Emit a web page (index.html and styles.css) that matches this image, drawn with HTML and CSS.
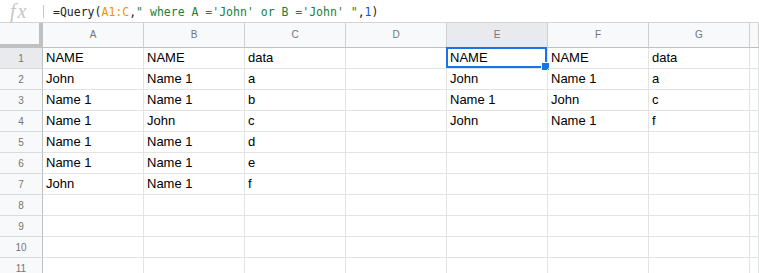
FILE: index.html
```html
<!DOCTYPE html>
<html lang="en">
<head>
    <meta charset="UTF-8">
    <meta name="viewport" content="width=device-width, initial-scale=1.0">
    <title>Query sheet</title>
    <link rel="stylesheet" href="styles.css">
</head>
<body>
    <div class="formula-bar">
        <span class="fx">fx</span>
        <span class="sep"></span>
        <div class="formula">=Query(<span class="ref">A1:C</span>,<span class="str">" where A ='John' or B ='John' "</span>,<span class="num">1</span>)</div>
    </div>

    <div class="grid" id="grid"></div>

    <script>
        const cols = ['A', 'B', 'C', 'D', 'E', 'F', 'G', ''];
        const data = [
            ['NAME', 'NAME', 'data', '', 'NAME', 'NAME', 'data'],
            ['John', 'Name 1', 'a', '', 'John', 'Name 1', 'a'],
            ['Name 1', 'Name 1', 'b', '', 'Name 1', 'John', 'c'],
            ['Name 1', 'John', 'c', '', 'John', 'Name 1', 'f'],
            ['Name 1', 'Name 1', 'd'],
            ['Name 1', 'Name 1', 'e'],
            ['John', 'Name 1', 'f']
        ];
        const grid = document.getElementById('grid');

        function add(cls, text) {
            let el = document.createElement('div');
            el.className = cls;
            el.innerText = text || '';
            grid.appendChild(el);
            return el;
        }

        // header row
        add('corner');
        cols.forEach((c, i) => add(i === 4 ? 'col-head active' : 'col-head', c));

        for (let r = 0; r < 11; r++) {
            add(r === 0 ? 'row-head active' : 'row-head', r + 1);
            for (let c = 0; c < cols.length; c++) {
                let row = data[r] || [];
                let cell = add('cell', row[c]);
                // E1 is the selected cell
                if (r === 0 && c === 4) {
                    let sel = document.createElement('div');
                    sel.className = 'selection';
                    sel.innerHTML = '<span class="handle"></span>';
                    cell.appendChild(sel);
                }
            }
        }
    </script>
</body>
</html>
```

FILE: styles.css
```css
body {
    margin: 0;
    width: 759px;
    height: 273px;
    overflow: hidden;
    background: #fff;
    font-family: "Liberation Sans", Arial, sans-serif;
}

.formula-bar {
    height: 23px;
    box-sizing: border-box;
    border-bottom: 1px solid #d4d4d4;
    display: flex;
    align-items: center;
}

.fx {
    width: 43px;
    padding-left: 10px;
    box-sizing: border-box;
    font-family: "Liberation Serif", serif;
    font-style: italic;
    font-size: 20px;
    letter-spacing: 2px;
    color: #c6c6c6;
    line-height: 22px;
}

.sep {
    width: 1px;
    height: 13px;
    background: #c8c8c8;
    margin-right: 9px;
}

.formula {
    font-family: "DejaVu Sans Mono", "Liberation Mono", monospace;
    font-size: 11.5px;
    color: #222;
    white-space: pre;
    padding-top: 1px;
}

.ref { color: #f09300; }
.str { color: #188038; }
.num { color: #1155cc; }

.grid {
    display: grid;
    grid-template-columns: 43px repeat(7, 101px) 1fr;
    grid-template-rows: 25px repeat(11, 21px);
}

.corner {
    background: #f8f9fa;
    border-right: 4px solid #c0c0c0;
    border-bottom: 4px solid #c0c0c0;
}

.col-head {
    background: #f8f9fa;
    border-right: 1px solid #cfcfcf;
    border-bottom: 1px solid #c0c0c0;
    font-size: 10px;
    color: #757575;
    text-align: center;
    line-height: 24px;
}

.row-head {
    background: #f8f9fa;
    border-right: 1px solid #c0c0c0;
    border-bottom: 1px solid #dadada;
    font-size: 10px;
    color: #757575;
    text-align: center;
    line-height: 22px;
}

.col-head.active,
.row-head.active {
    background: #e8eaed;
}

.cell {
    position: relative;
    border-right: 1px solid #e2e3e3;
    border-bottom: 1px solid #e2e3e3;
    font-size: 13px;
    color: #000;
    line-height: 20px;
    padding: 0 3px;
    white-space: nowrap;
    overflow: visible;
}

.selection {
    position: absolute;
    left: -1px;
    top: -1px;
    width: 101px;
    height: 21px;
    box-sizing: border-box;
    border: 2px solid #1a73e8;
}

.handle {
    position: absolute;
    right: -5px;
    bottom: -5px;
    width: 7px;
    height: 7px;
    background: #1a73e8;
    border: 1px solid #fff;
}
```
